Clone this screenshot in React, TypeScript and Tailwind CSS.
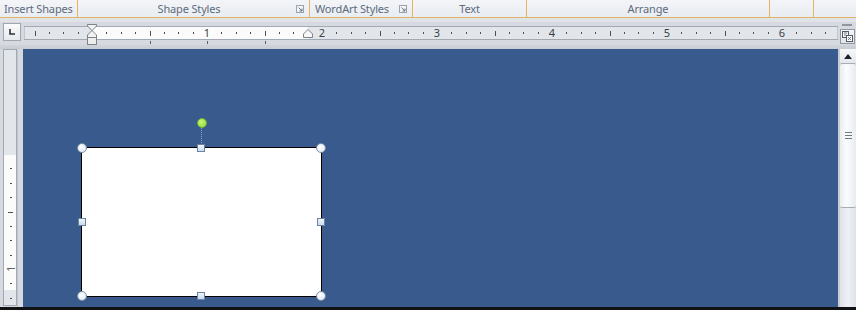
import React from "react";

const E = 14.375; // one eighth of an inch in px

function Launcher() {
  return (
    <svg width="8" height="8" viewBox="0 0 8 8" className="block">
      <rect x="0.5" y="0.5" width="7" height="7" fill="#f4f5f7" stroke="#9aa4b0" />
      <path d="M2.5 2.5 L6 6 M6 3.5 L6 6 L3.5 6" stroke="#6c7785" strokeWidth="1" fill="none" />
    </svg>
  );
}

function HRuler() {
  const items: React.ReactNode[] = [];
  for (let i = -4; i <= 51; i++) {
    const x = 68 + i * E;
    if (i === 0) continue;
    if (i % 8 === 0) {
      items.push(
        <text
          key={"n" + i}
          x={x}
          y={15}
          textAnchor="middle"
          fontSize="11"
          fontFamily="'Noto Sans', 'DejaVu Sans', sans-serif"
          fill="#3a3f46"
        >
          {i / 8}
        </text>
      );
    } else if (i % 4 === 0) {
      items.push(<rect key={"l" + i} x={Math.round(x)} y={9} width={1} height={5} fill="#4a4f56" />);
    } else {
      items.push(<rect key={"s" + i} x={Math.round(x)} y={10} width={1} height={2} fill="#4a4f56" />);
    }
  }
  const tabs = [150, 207, 265];
  return (
    <svg width="814" height="23" viewBox="0 0 814 23" className="block">
      <rect x="0" y="4.5" width="814" height="13" fill="#e2e5e9" stroke="#a1a9b3" />
      <rect x="68" y="5" width="216" height="12" fill="#fbfbfb" />
      {items}
      {tabs.map((t) => (
        <rect key={t} x={t - 24} y={19} width={1} height={3} fill="#5a6069" />
      ))}
      {/* hanging indent hourglass */}
      <path d="M63.5 2.5 L72.5 2.5 L72.5 4 L68 8.5 L63.5 4 Z" fill="#f2f2f2" stroke="#7b838d" />
      <path d="M68 8.5 L72.5 13 L72.5 15.5 L63.5 15.5 L63.5 13 Z" fill="#f2f2f2" stroke="#7b838d" />
      <rect x="63.5" y="15.5" width="9" height="7" fill="#ececec" stroke="#7b838d" />
      {/* right indent */}
      <path d="M284 7.5 L288.5 12 L288.5 15.5 L279.5 15.5 L279.5 12 Z" fill="#f7f7f7" stroke="#7b838d" />
    </svg>
  );
}

function VRuler() {
  const items: React.ReactNode[] = [];
  for (let j = 1; j <= 10; j++) {
    const y = 105 + j * E;
    if (j === 8) {
      items.push(
        <text
          key={j}
          x={0}
          y={0}
          transform={`translate(10.5 ${y}) rotate(-90)`}
          textAnchor="middle"
          dominantBaseline="central"
          fontSize="10"
          fontFamily="'Noto Sans', 'DejaVu Sans', sans-serif"
          fill="#3a3f46"
        >
          1
        </text>
      );
    } else if (j % 4 === 0) {
      items.push(<rect key={j} x={8} y={Math.round(y)} width={5} height={1} fill="#4a4f56" />);
    } else {
      items.push(<rect key={j} x={10} y={Math.round(y)} width={2} height={1} fill="#4a4f56" />);
    }
  }
  return (
    <svg width="23" height="258" viewBox="0 0 23 258" className="block">
      <rect x="3.5" y="0.5" width="13" height="256" fill="#e2e5e9" stroke="#a1a9b3" />
      <rect x="4" y="106" width="12" height="135" fill="#fbfbfb" />
      <line x1="17.5" y1="0" x2="17.5" y2="258" stroke="#bfc5cd" />
      {items}
    </svg>
  );
}

function Handle({ pos, kind }: { pos: string; kind: "c" | "s" }) {
  if (kind === "c") {
    return (
      <div
        className={
          "absolute w-[10px] h-[10px] rounded-full border border-[#7f8fa3] bg-[radial-gradient(circle_at_40%_35%,#ffffff,#d6e4f3)] " +
          pos
        }
      />
    );
  }
  return (
    <div
      className={
        "absolute w-[8px] h-[8px] border border-[#6f8299] bg-[linear-gradient(#eef5fc,#c9dcf0)] " + pos
      }
    />
  );
}

export default function App() {
  const font = "font-['Noto_Sans','DejaVu_Sans',sans-serif]";
  return (
    <div className={"w-[856px] h-[310px] flex flex-col overflow-hidden bg-[#d6dae0] " + font}>
      {/* ribbon group labels */}
      <div className="h-[18px] flex border-b border-[#e2b468] bg-[linear-gradient(#f3f5f8,#e9ecf0)] text-[11px] tracking-[-0.15px] leading-[17px] text-[#5c6b7e]">
        <div className="w-[78px] border-r border-[#e8b35e] pl-[4px]">Insert Shapes</div>
        <div className="w-[232px] border-r border-[#e8b35e] flex items-center">
          <div className="flex-1 text-center pl-[4px]">Shape Styles</div>
          <div className="mr-[5px]">
            <Launcher />
          </div>
        </div>
        <div className="w-[103px] border-r border-[#e8b35e] flex items-center">
          <div className="pl-[5px] flex-1">WordArt Styles</div>
          <div className="mr-[5px]">
            <Launcher />
          </div>
        </div>
        <div className="w-[114px] border-r border-[#e8b35e] text-center">Text</div>
        <div className="w-[243px] border-r border-[#e8b35e] text-center">Arrange</div>
        <div className="w-[44px] border-r border-[#e8b35e]" />
        <div className="flex-1" />
      </div>
      <div className="h-[4px] bg-[#dfe2e7]" />
      {/* ruler row */}
      <div className="h-[23px] flex bg-[#d6dae0]">
        <div className="ml-[3px] mt-[1px] w-[18px] h-[18px] border border-[#9ea6b0] bg-[linear-gradient(#fbfbfc,#e6e9ed)] flex items-center justify-center">
          <svg width="8" height="8" viewBox="0 0 8 8">
            <path d="M2 1 V6 H7" stroke="#2d3136" strokeWidth="1.6" fill="none" />
          </svg>
        </div>
        <div className="w-[3px]" />
        <HRuler />
        <div className="flex-1 flex flex-col items-center">
          <div className="mt-[2px] w-[10px] h-[2px] bg-[#8e96a1]" />
          <div className="mt-[3px] w-[15px] h-[15px] border border-[#8e96a1] bg-[linear-gradient(#f7f8fa,#dfe3e8)] flex items-center justify-center">
            <svg width="11" height="11" viewBox="0 0 11 11">
              <rect x="0.5" y="0.5" width="6" height="6" fill="#f4f4f4" stroke="#555b63" />
              <rect x="4.5" y="4.5" width="6" height="6" fill="#ffffff" stroke="#555b63" />
              <path d="M6 6 L9 9 M9 6 L6 9" stroke="#555b63" strokeWidth="0.8" />
              <path d="M2 2 H5 M2 4 H4" stroke="#555b63" strokeWidth="0.8" />
            </svg>
          </div>
        </div>
      </div>
      <div className="h-[4px] bg-[linear-gradient(#d0d4da,#c6cbd2)]" />
      {/* main */}
      <div className="flex-1 flex min-h-0">
        <div className="w-[23px] bg-[#d6dae0]">
          <VRuler />
        </div>
        <div className="flex-1 bg-[#385a8c] pt-[98px] pl-[58px]">
          <div className="relative w-[241px] h-[150px] bg-white border border-black">
            <div className="absolute left-[119px] -top-[21px] h-[16px] border-l border-dotted border-[#8ea3c0]" />
            <div className="absolute left-[115px] -top-[30px] w-[10px] h-[10px] rounded-full border border-[#72b236] bg-[radial-gradient(circle_at_40%_35%,#c8f57a,#8fd832)]" />
            <Handle kind="c" pos="-left-[5px] -top-[5px]" />
            <Handle kind="c" pos="-right-[5px] -top-[5px]" />
            <Handle kind="c" pos="-left-[5px] -bottom-[5px]" />
            <Handle kind="c" pos="-right-[5px] -bottom-[5px]" />
            <Handle kind="s" pos="left-[115px] -top-[4px]" />
            <Handle kind="s" pos="left-[115px] -bottom-[4px]" />
            <Handle kind="s" pos="-left-[4px] top-[70px]" />
            <Handle kind="s" pos="-right-[4px] top-[70px]" />
          </div>
        </div>
        <div className="w-[18px] flex flex-col border-l-2 border-[#c9ced5] bg-[linear-gradient(90deg,#dde2e8,#eef1f5_50%,#dde2e8)]">
          <div className="h-[14px] flex items-center justify-center bg-[linear-gradient(#f6f7f9,#e4e8ed)]">
            <svg width="8" height="5" viewBox="0 0 8 5">
              <path d="M0 5 L4 0 L8 5 Z" fill="#1f2328" />
            </svg>
          </div>
          <div className="h-[145px] border-y border-[#a4adb8] rounded-[2px] bg-[linear-gradient(90deg,#e9ecf0,#fbfcfd_40%,#e8ebef)] flex items-center justify-center">
            <div className="flex flex-col gap-[2px]">
              <div className="w-[7px] h-px bg-[#6f7781]" />
              <div className="w-[7px] h-px bg-[#6f7781]" />
              <div className="w-[7px] h-px bg-[#6f7781]" />
            </div>
          </div>
          <div className="flex-1" />
        </div>
      </div>
      <div className="h-[3px] bg-[#111214]" />
    </div>
  );
}
